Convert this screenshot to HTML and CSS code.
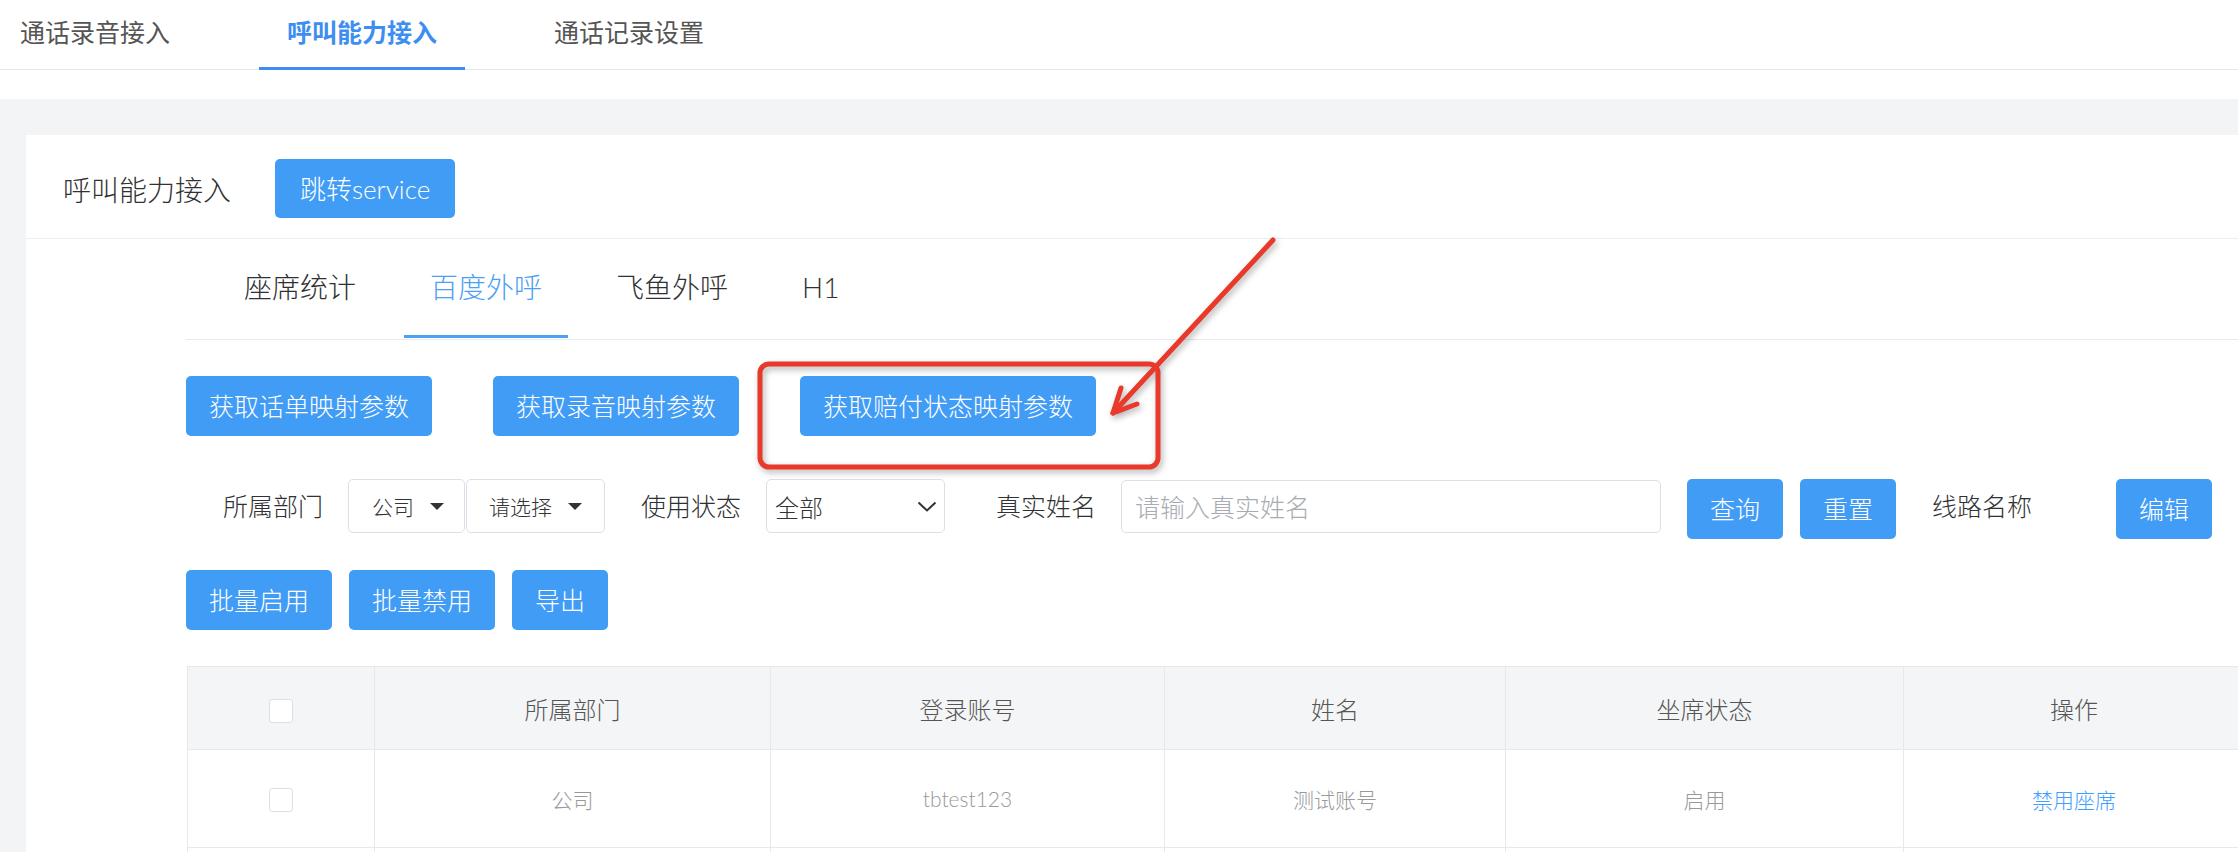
FILE: index.html
```html
<!DOCTYPE html>
<html>

<head>
  <meta charset="UTF-8"/>
  <title>呼叫能力接入</title>
  <link rel="stylesheet" href="styles.css">
</head>

<body>
  <div class="top-nav">
    <div class="top-tabs">
      <div class="top-tab">通话录音接入</div>
      <div class="top-tab active">呼叫能力接入</div>
      <div class="top-tab">通话记录设置</div>
    </div>
  </div>

  <div class="main">
    <div class="card">
      <div class="card-head">
        <span class="card-title">呼叫能力接入</span>
        <button class="btn">跳转service</button>
      </div>

      <div class="card-body">
        <div class="sub-tabs">
          <div class="sub-tab">座席统计</div>
          <div class="sub-tab active">百度外呼</div>
          <div class="sub-tab">飞鱼外呼</div>
          <div class="sub-tab">H1</div>
        </div>

        <div class="btn-row map-row">
          <button class="btn">获取话单映射参数</button>
          <button class="btn">获取录音映射参数</button>
          <button class="btn">获取赔付状态映射参数</button>
        </div>

        <div class="filter-row">
          <span class="filter-label">所属部门</span>
          <div class="dropdown dept-1">公司<i class="caret"></i></div>
          <div class="dropdown dept-2">请选择<i class="caret"></i></div>
          <span class="filter-label gap-l">使用状态</span>
          <div class="dropdown status">
            全部
            <svg class="chevron" width="20" height="11" viewBox="0 0 20 11"><polyline points="1.5,1.5 10,9.5 18.5,1.5" fill="none" stroke="#333" stroke-width="2"/></svg>
          </div>
          <span class="filter-label gap-xl">真实姓名</span>
          <input class="name-input" type="text" placeholder="请输入真实姓名">
          <button class="btn btn-small gap-m">查询</button>
          <button class="btn btn-small gap-s">重置</button>
          <span class="filter-label gap-l">线路名称</span>
          <button class="btn btn-small gap-xxl">编辑</button>
        </div>

        <div class="btn-row batch-row">
          <button class="btn">批量启用</button>
          <button class="btn">批量禁用</button>
          <button class="btn">导出</button>
        </div>

        <table class="grid">
          <colgroup>
            <col style="width: 187px">
            <col style="width: 396px">
            <col style="width: 394px">
            <col style="width: 341px">
            <col style="width: 398px">
            <col style="width: 341px">
          </colgroup>
          <thead>
            <tr>
              <th><span class="check"></span></th>
              <th>所属部门</th>
              <th>登录账号</th>
              <th>姓名</th>
              <th>坐席状态</th>
              <th>操作</th>
            </tr>
          </thead>
          <tbody>
            <tr>
              <td><span class="check"></span></td>
              <td>公司</td>
              <td>tbtest123</td>
              <td>测试账号</td>
              <td>启用</td>
              <td><a class="op-link" href="javascript:void(0)">禁用座席</a></td>
            </tr>
            <tr>
              <td></td><td></td><td></td><td></td><td></td><td></td>
            </tr>
          </tbody>
        </table>
      </div>
    </div>
  </div>

  <!-- screenshot annotation -->
  <svg class="annotation" width="2238" height="852" viewBox="0 0 2238 852">
    <g fill="none" stroke="#e8392b" stroke-width="5" stroke-linecap="round" stroke-linejoin="round">
      <rect x="760" y="364" width="398" height="103" rx="9"/>
      <path d="M1273 240 L1113 413"/>
      <path d="M1121 388 L1113 413 L1137 404"/>
    </g>
  </svg>
</body>

</html>
```

FILE: styles.css
```css
html, body {
  margin: 0;
  padding: 0;
}
body {
  position: relative;
  width: 2238px;
  height: 852px;
  overflow: hidden;
  background-color: #f3f4f6;
  font-family: Lato, "Noto Sans CJK SC", sans-serif;
  font-weight: 300;
  color: #333;
}

/* top navigation */
.top-nav {
  background-color: #fff;
  padding-bottom: 29px;
}
.top-tabs {
  display: flex;
  height: 69px;
  border-bottom: 1px solid #e4e7ed;
}
.top-tab {
  box-sizing: border-box;
  height: 70px;
  padding: 0 28px;
  margin-right: 61px;
  font-size: 25px;
  font-weight: 400;
  line-height: 64px;
  color: #555;
  border-bottom: 3px solid transparent;
}
.top-tab:first-child {
  padding-left: 20px;
}
.top-tab.active {
  color: #3d8ef0;
  font-weight: bold;
  border-bottom-color: #3d8ef0;
}

/* card */
.main {
  padding: 36px 0 0 26px;
}
.card {
  width: 2240px;
  min-height: 760px;
  background-color: #fff;
}
.card-head {
  display: flex;
  align-items: center;
  height: 99px;
  padding: 4px 37px 0;
  border-bottom: 1px solid #ebeef5;
}
.card-title {
  font-size: 28px;
  color: #303133;
  margin-right: 44px;
}
.card-body {
  padding-left: 160px;
}

/* buttons */
.btn {
  height: 60px;
  padding: 0 23px;
  border: 0;
  border-radius: 5px;
  background-color: #419cf6;
  color: #fff;
  font-family: inherit;
  font-weight: inherit;
  font-size: 25px;
  line-height: 60px;
  white-space: nowrap;
  cursor: pointer;
}
.card-head .btn {
  height: 59px;
  padding: 0 25px;
  font-size: 26px;
}
.btn-small {
  padding: 0 23px;
}

/* sub tabs */
.sub-tabs {
  display: flex;
  height: 100px;
  border-bottom: 1px solid #e8eaee;
}
.sub-tab {
  box-sizing: border-box;
  height: 99px;
  padding: 0 26px;
  margin-right: 22px;
  font-size: 28px;
  line-height: 96px;
  color: #303133;
  border-bottom: 3px solid transparent;
}
.sub-tab:first-child {
  margin-left: 32px;
}
.sub-tab.active {
  color: #4ba0f6;
  border-bottom-color: #4ba0f6;
}

.btn-row {
  display: flex;
}
.map-row {
  margin-top: 36px;
  gap: 61px;
}
.batch-row {
  margin-top: 31px;
  gap: 17px;
}

/* filters */
.filter-row {
  display: flex;
  align-items: flex-start;
  margin-top: 43px;
  padding-left: 37px;
}
.filter-label {
  font-size: 25px;
  line-height: 54px;
  color: #303133;
  margin-right: 25px;
  white-space: nowrap;
}
.dropdown {
  box-sizing: border-box;
  display: flex;
  align-items: center;
  height: 54px;
  border: 1px solid #dcdfe6;
  border-radius: 5px;
  font-size: 21px;
  color: #333;
}
.dept-1 {
  width: 117px;
  padding-left: 23px;
}
.dept-2 {
  width: 139px;
  padding-left: 22px;
  margin-left: 1px;
}
.caret {
  width: 0;
  height: 0;
  margin-left: 16px;
  border-left: 7px solid transparent;
  border-right: 7px solid transparent;
  border-top: 7px solid #333;
}
.status {
  width: 179px;
  justify-content: space-between;
  padding: 0 7px 0 8px;
  font-size: 24px;
}
.name-input {
  box-sizing: border-box;
  width: 540px;
  height: 53px;
  margin: 1px 0 0;
  padding: 0 13px;
  border: 1px solid #dcdfe6;
  border-radius: 5px;
  font-family: inherit;
  font-weight: inherit;
  font-size: 25px;
  color: #333;
  outline: none;
}
.name-input::placeholder {
  color: #a8abb2;
}
.gap-s { margin-left: 17px; }
.gap-m { margin-left: 26px; }
.gap-l { margin-left: 36px; }
.gap-xl { margin-left: 51px; }
.gap-xxl { margin-left: 59px; }

/* table */
.grid {
  margin: 36px 0 0 1px;
  width: 2057px;
  table-layout: fixed;
  border-collapse: collapse;
}
.grid th, .grid td {
  padding: 0;
  border: 1px solid #e6e8eb;
  text-align: center;
  vertical-align: middle;
}
.grid th {
  height: 82px;
  background-color: #f4f5f7;
  font-weight: inherit;
  font-size: 24px;
  color: #555;
}
.grid td {
  height: 97px;
  font-size: 21px;
  color: #999;
}
.check {
  display: inline-block;
  box-sizing: border-box;
  width: 24px;
  height: 24px;
  border: 1px solid #dcdfe6;
  border-radius: 3px;
  background-color: #fff;
  vertical-align: middle;
}
.op-link {
  color: #409eff;
  text-decoration: none;
}

/* annotation overlay */
.annotation {
  position: absolute;
  left: 0;
  top: 0;
  pointer-events: none;
  filter: drop-shadow(2px 3px 3px rgba(0, 0, 0, 0.3));
}
```
